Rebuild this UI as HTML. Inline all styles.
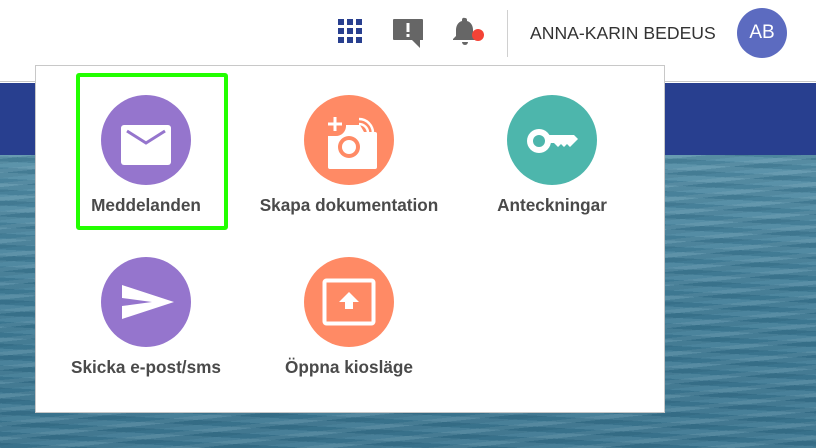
<!DOCTYPE html>
<html><head><meta charset="utf-8"><style>
*{margin:0;padding:0;box-sizing:border-box}
body{width:816px;height:448px;overflow:hidden;position:relative;font-family:"Liberation Sans",Arial,sans-serif;background:#fff}
.hdr{position:absolute;left:0;top:0;width:816px;height:82px;background:#fff;border-bottom:1px solid #c8c8c8}
.blue{position:absolute;left:0;top:83px;width:816px;height:72px;background:#283f8f}
.sea{position:absolute;left:0;top:155px;width:816px;height:293px;
background:repeating-linear-gradient(174deg,rgba(255,255,255,0.07) 0 4px,rgba(0,40,60,0.08) 4px 9px,rgba(255,255,255,0) 9px 14px),
repeating-linear-gradient(183deg,rgba(20,70,95,0.15) 0 5px,rgba(180,200,210,0.08) 5px 11px),
linear-gradient(#5690a8,#437f99 50%,#3e7892)}
.menu{position:absolute;left:35px;top:65px;width:630px;height:348px;background:#fff;border:1px solid #c8c8c8}
.sel{position:absolute;left:76px;top:73px;width:152px;height:157px;border:4px solid #22ff00;border-radius:3px}
.item{position:absolute;width:220px;text-align:center;font-size:17.2px;font-weight:bold;color:#4a4a4a}
.circ{width:90px;height:90px;border-radius:50%;margin:0 auto;position:relative}
.item .lab{margin-top:10px}
.name{position:absolute;left:530px;top:23px;font-size:17.6px;color:#333}
.av{position:absolute;left:737px;top:8px;width:50px;height:50px;border-radius:50%;background:#5c6bc0;color:#fff;font-size:19px;text-align:center;line-height:50px}
.div{position:absolute;left:507px;top:10px;width:1px;height:47px;background:#d0d0d0}
</style></head><body>
<div class="hdr"></div>
<div class="blue"></div>
<div class="sea"></div>
<svg style="position:absolute;left:338px;top:19px" width="24" height="24"><g fill="#283f8f">
<rect x="0" y="0" width="6" height="6"/><rect x="9" y="0" width="6" height="6"/><rect x="18" y="0" width="6" height="6"/>
<rect x="0" y="9" width="6" height="6"/><rect x="9" y="9" width="6" height="6"/><rect x="18" y="9" width="6" height="6"/>
<rect x="0" y="18" width="6" height="6"/><rect x="9" y="18" width="6" height="6"/><rect x="18" y="18" width="6" height="6"/></g></svg>
<svg style="position:absolute;left:392px;top:18px" width="32" height="32"><path d="M2 1h28a1 1 0 0 1 1 1v20h-3v8l-8-8H2a1 1 0 0 1-1-1V2a1 1 0 0 1 1-1z" fill="#666"/><rect x="14.5" y="5" width="3" height="9" fill="#fff"/><rect x="14.5" y="16" width="3" height="3" fill="#fff"/></svg>
<svg style="position:absolute;left:452px;top:16px" width="36" height="32"><path d="M13 2a2 2 0 0 1 2 2v1c4 1 6 5 6 9v6l3 3v1H1v-1l3-3v-6c0-4 2-8 6-9V4a2 2 0 0 1 3-2z" fill="#666"/><path d="M10 26h6a3 3 0 0 1-6 0z" fill="#666"/><circle cx="26" cy="19" r="6" fill="#f44336"/></svg>
<div class="div"></div>
<div class="name">ANNA-KARIN BEDEUS</div>
<div class="av">AB</div>
<div class="menu"></div>
<div class="sel"></div>
<div class="item" style="left:36px;top:95px"><div class="circ" style="background:#9575cd">
<svg width="90" height="90"><rect x="20" y="30" width="50" height="40" rx="3" fill="#fff"/><path d="M26 36l19 12 19-12" stroke="#9575cd" stroke-width="3" fill="none"/></svg></div><div class="lab">Meddelanden</div></div>
<div class="item" style="left:239px;top:95px"><div class="circ" style="background:#ff8a65">
<svg width="90" height="90"><path d="M24 41h8a10 10 0 0 0 10-10v-1h14l4 7h11a2 2 0 0 1 2 2v33a2 2 0 0 1-2 2H26a2 2 0 0 1-2-2z" fill="#fff"/><circle cx="45" cy="52" r="11" fill="#ff8a65"/><circle cx="45" cy="52" r="7" fill="#fff"/><path d="M24 29h14M31 22v14" stroke="#fff" stroke-width="3"/><path d="M55 24a14 14 0 0 1 14 14M55 29a9 9 0 0 1 9 9" stroke="#fff" stroke-width="2.5" fill="none"/></svg></div><div class="lab">Skapa dokumentation</div></div>
<div class="item" style="left:442px;top:95px"><div class="circ" style="background:#4db6ac">
<svg width="90" height="90"><circle cx="32" cy="46" r="12" fill="#fff"/><circle cx="32" cy="46" r="6" fill="#4db6ac"/><path d="M42 40h25l4 4-8 8-3-3-3 3-3-3-3 3-4-4h-5z" fill="#fff"/></svg></div><div class="lab">Anteckningar</div></div>
<div class="item" style="left:36px;top:257px"><div class="circ" style="background:#9575cd">
<svg width="90" height="90"><path d="M21 28l52 17-52 17v-13l30-4-30-4z" fill="#fff"/></svg></div><div class="lab">Skicka e-post/sms</div></div>
<div class="item" style="left:239px;top:257px"><div class="circ" style="background:#ff8a65">
<svg width="90" height="90"><rect x="20.5" y="23.5" width="49" height="43" rx="2" stroke="#fff" stroke-width="4" fill="none"/><path d="M45 35l-10 10h6v7h8v-7h6z" fill="#fff"/></svg></div><div class="lab">Öppna kiosläge</div></div>
</body></html>
